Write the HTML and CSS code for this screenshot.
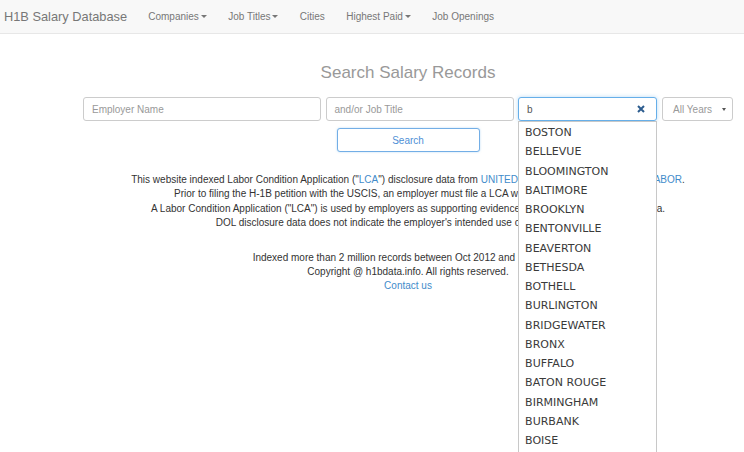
FILE: index.html
```html
<!DOCTYPE html>
<html>
<head>
<meta charset="utf-8">
<link rel="stylesheet" href="styles.css">
</head>
<body>
<nav class="navbar">
  <span class="brand">H1B Salary Database</span>
  <span class="nav-link">Companies<i class="caret"></i></span>
  <span class="nav-link">Job Titles<i class="caret"></i></span>
  <span class="nav-link">Cities</span>
  <span class="nav-link">Highest Paid<i class="caret"></i></span>
  <span class="nav-link">Job Openings</span>
</nav>
<main class="main">
  <h1 class="title">Search Salary Records</h1>
  <div class="search-row">
    <div class="field field-employer"><span class="placeholder">Employer Name</span></div>
    <div class="field field-job"><span class="placeholder">and/or Job Title</span></div>
    <div class="city-wrap">
      <div class="field field-city focused">
        <span class="value">b</span>
        <svg class="clear" width="8" height="8" viewBox="0 0 8 8"><path d="M1 1L7 7M7 1L1 7" stroke="#2d5d8f" stroke-width="2" stroke-linecap="butt"/></svg>
      </div>
      <ul class="suggest">
        <li>BOSTON</li>
        <li>BELLEVUE</li>
        <li>BLOOMINGTON</li>
        <li>BALTIMORE</li>
        <li>BROOKLYN</li>
        <li>BENTONVILLE</li>
        <li>BEAVERTON</li>
        <li>BETHESDA</li>
        <li>BOTHELL</li>
        <li>BURLINGTON</li>
        <li>BRIDGEWATER</li>
        <li>BRONX</li>
        <li>BUFFALO</li>
        <li>BATON ROUGE</li>
        <li>BIRMINGHAM</li>
        <li>BURBANK</li>
        <li>BOISE</li>
      </ul>
    </div>
    <div class="field field-year"><span class="value-gray">All Years</span><i class="sel-caret"></i></div>
  </div>
  <div class="btn-row"><button class="btn">Search</button></div>
  <p class="info">This website indexed Labor Condition Application ("<a>LCA</a>") disclosure data from <a>UNITED STATES DEPARTMENT OF LABOR</a>.<br>
  Prior to filing the H-1B petition with the USCIS, an employer must file a LCA with the Department of Labor.<br>
  A Labor Condition Application ("LCA") is used by employers as supporting evidence in their petition for an H-1B visa.<br>
  DOL disclosure data does not indicate the employer's intended use of the H-1B worker.</p>
  <p class="info">Indexed more than 2 million records between Oct 2012 and Dec 2017.<br>
  Copyright @ h1bdata.info. All rights reserved.<br>
  <a>Contact us</a></p>
</main>
</body>
</html>
```

FILE: styles.css
```css
html, body { height: 452px; }
body {
  margin: 0;
  overflow: hidden;
  font-family: "Liberation Sans", Arial, sans-serif;
  font-size: 10px;
  color: #333;
  background: #fff;
}
.navbar {
  display: flex;
  align-items: center;
  height: 33px;
  background: #f8f8f8;
  border-bottom: 1px solid #e7e7e7;
}
.brand {
  font-size: 12.8px;
  color: #777;
  padding: 0 10.5px 0 4px;
}
.nav-link {
  color: #777;
  padding: 0 10.7px;
  display: flex;
  align-items: center;
}
.caret {
  display: inline-block;
  margin-left: 2px;
  width: 0;
  height: 0;
  border-top: 3px solid #777;
  border-left: 3px solid transparent;
  border-right: 3px solid transparent;
}
.main {
  width: 650px;
  margin-left: 83px;
}
.title {
  margin: 28px 0 0;
  height: 35px;
  font-weight: normal;
  font-size: 17px;
  line-height: 22px;
  color: #999;
  text-align: center;
}
.search-row {
  display: flex;
  gap: 5px;
}
.field {
  box-sizing: border-box;
  height: 24px;
  border: 1px solid #ccc;
  border-radius: 3px;
  display: flex;
  align-items: center;
  padding: 0 8px;
  background: #fff;
}
.field-employer { width: 238px; }
.field-job { width: 189px; margin-right: -1px; }
.city-wrap { position: relative; width: 139px; }
.field-city { width: 139px; justify-content: space-between; padding-right: 11px; }
.field-year { width: 71px; padding-left: 10px; padding-right: 6px; justify-content: space-between; }
.placeholder { color: #999; }
.value { color: #555; }
.value-gray { color: #999; }
.focused {
  border-color: #66afe9;
  box-shadow: 0 0 4px rgba(102, 175, 233, 0.45);
}
.sel-caret {
  width: 0;
  height: 0;
  border-top: 3px solid #555;
  border-left: 2px solid transparent;
  border-right: 2px solid transparent;
}
.suggest {
  position: absolute;
  top: 24px;
  left: 0;
  box-sizing: border-box;
  width: 139px;
  height: 331px;
  overflow: hidden;
  margin: 0;
  padding: 1px 0 0;
  list-style: none;
  background: #fff;
  border: 1px solid #c8c8c8;
  border-bottom: none;
  z-index: 2;
}
.suggest li {
  font-family: "DejaVu Sans", Verdana, sans-serif;
  font-size: 11px;
  line-height: 19.25px;
  color: #3a3a3a;
  padding-left: 6px;
  white-space: nowrap;
}
.btn-row {
  display: flex;
  justify-content: center;
  margin-top: 7px;
}
.btn {
  width: 143px;
  height: 24px;
  border: 1px solid #73aee6;
  border-radius: 3px;
  background: #fff;
  color: #4f8fd6;
  font-family: "Liberation Sans", Arial, sans-serif;
  font-size: 10px;
  box-shadow: 0 0 2px rgba(102, 175, 233, 0.5);
}
.info {
  text-align: center;
  line-height: 14.4px;
  margin: 21px 0 0;
  white-space: nowrap;
}
.info + .info { margin-top: 20px; }
.info a { color: #428bca; text-decoration: none; }
```
